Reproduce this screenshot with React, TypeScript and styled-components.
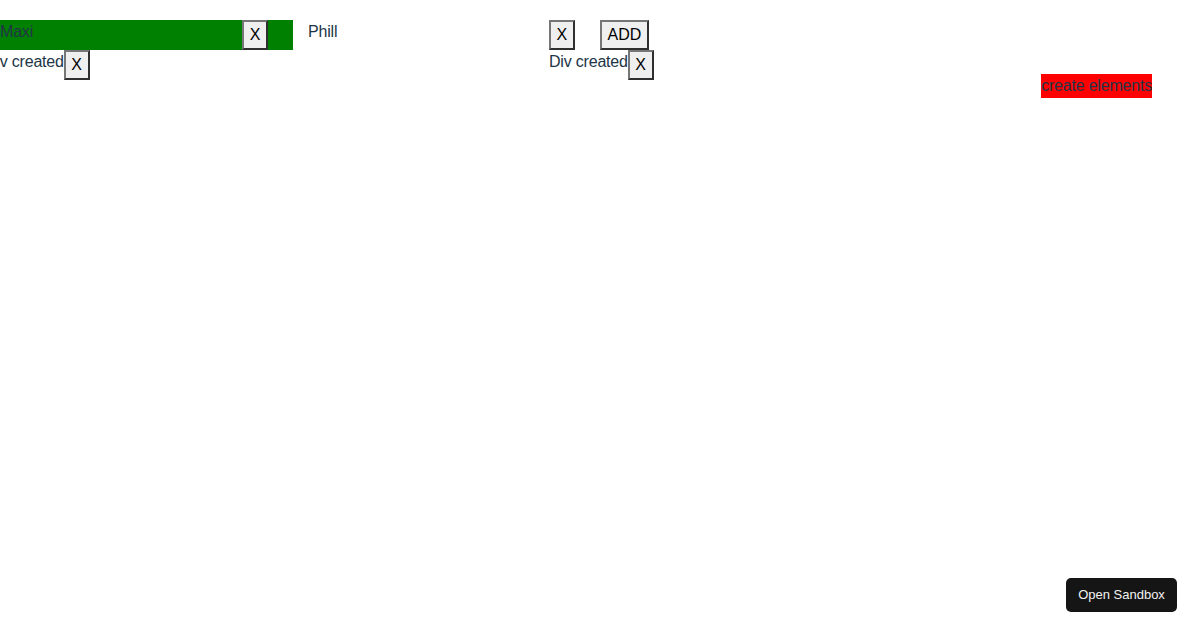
import React from 'react';
import styled, { createGlobalStyle } from 'styled-components';

const GlobalStyle = createGlobalStyle`
  body {
    margin: 0;
    font-family: "Liberation Sans", Arial, sans-serif;
    font-size: 16px;
    line-height: 1.5;
    color: #213547;
    background: #ffffff;
  }
`;

const Page = styled.div`
  display: flex;
  align-items: flex-start;
  padding-top: 20px;
  overflow: hidden;
`;

const Column = styled.div<{ width?: number }>`
  display: flex;
  flex-direction: column;
  width: ${p => (p.width ? `${p.width}px` : 'auto')};
  flex-shrink: 0;
`;

const Row = styled.div<{ shift?: number; gap?: number }>`
  display: flex;
  align-items: flex-start;
  gap: ${p => p.gap || 0}px;
  margin-left: ${p => p.shift || 0}px;
`;

const NameBar = styled.div`
  display: flex;
  align-items: flex-start;
  justify-content: space-between;
  width: 293px;
  height: 30px;
  padding-right: 25px;
  box-sizing: border-box;
  background: #008000;
`;

const Name = styled.span`
  line-height: 24px;
  letter-spacing: -0.2px;
  white-space: nowrap;
`;

const SideName = styled(Name)`
  margin-left: 15px;
`;

const Button = styled.button`
  font-family: "Liberation Sans", Arial, sans-serif;
  font-size: 16px;
  line-height: 24px;
  color: #000;
  background: #efefef;
  padding: 1px 5.6px;
  margin: 0;
  border: 2px solid;
  border-color: #767676 #2f2f2f #2f2f2f #767676;
  border-radius: 0;
  cursor: pointer;
`;

const CreateButton = styled.span`
  margin: 54px 48px 0 auto;
  background: #ff0000;
  color: #213547;
  line-height: 24px;
  letter-spacing: -0.2px;
  white-space: nowrap;
  cursor: pointer;
`;

const SandboxButton = styled.button`
  position: fixed;
  right: 23px;
  bottom: 18px;
  width: 111px;
  height: 34px;
  padding: 0 0 1px;
  border: none;
  border-radius: 5px;
  background: #151515;
  color: #f2f2f2;
  font-family: "Liberation Sans", Arial, sans-serif;
  font-size: 13px;
  cursor: pointer;
`;

const App: React.FC = () => {
  return (
    <>
      <GlobalStyle />
      <Page>
        <Column width={549}>
          <Row>
            <NameBar>
              <Name>Maxi</Name>
              <Button>X</Button>
            </NameBar>
            <SideName>Phill</SideName>
          </Row>
          <Row shift={-15}>
            <Name>Div created</Name>
            <Button>X</Button>
          </Row>
        </Column>
        <Column>
          <Row gap={25}>
            <Button>X</Button>
            <Button>ADD</Button>
          </Row>
          <Row>
            <Name>Div created</Name>
            <Button>X</Button>
          </Row>
        </Column>
        <CreateButton>create elements</CreateButton>
      </Page>
      <SandboxButton>Open Sandbox</SandboxButton>
    </>
  );
};

export default App;
